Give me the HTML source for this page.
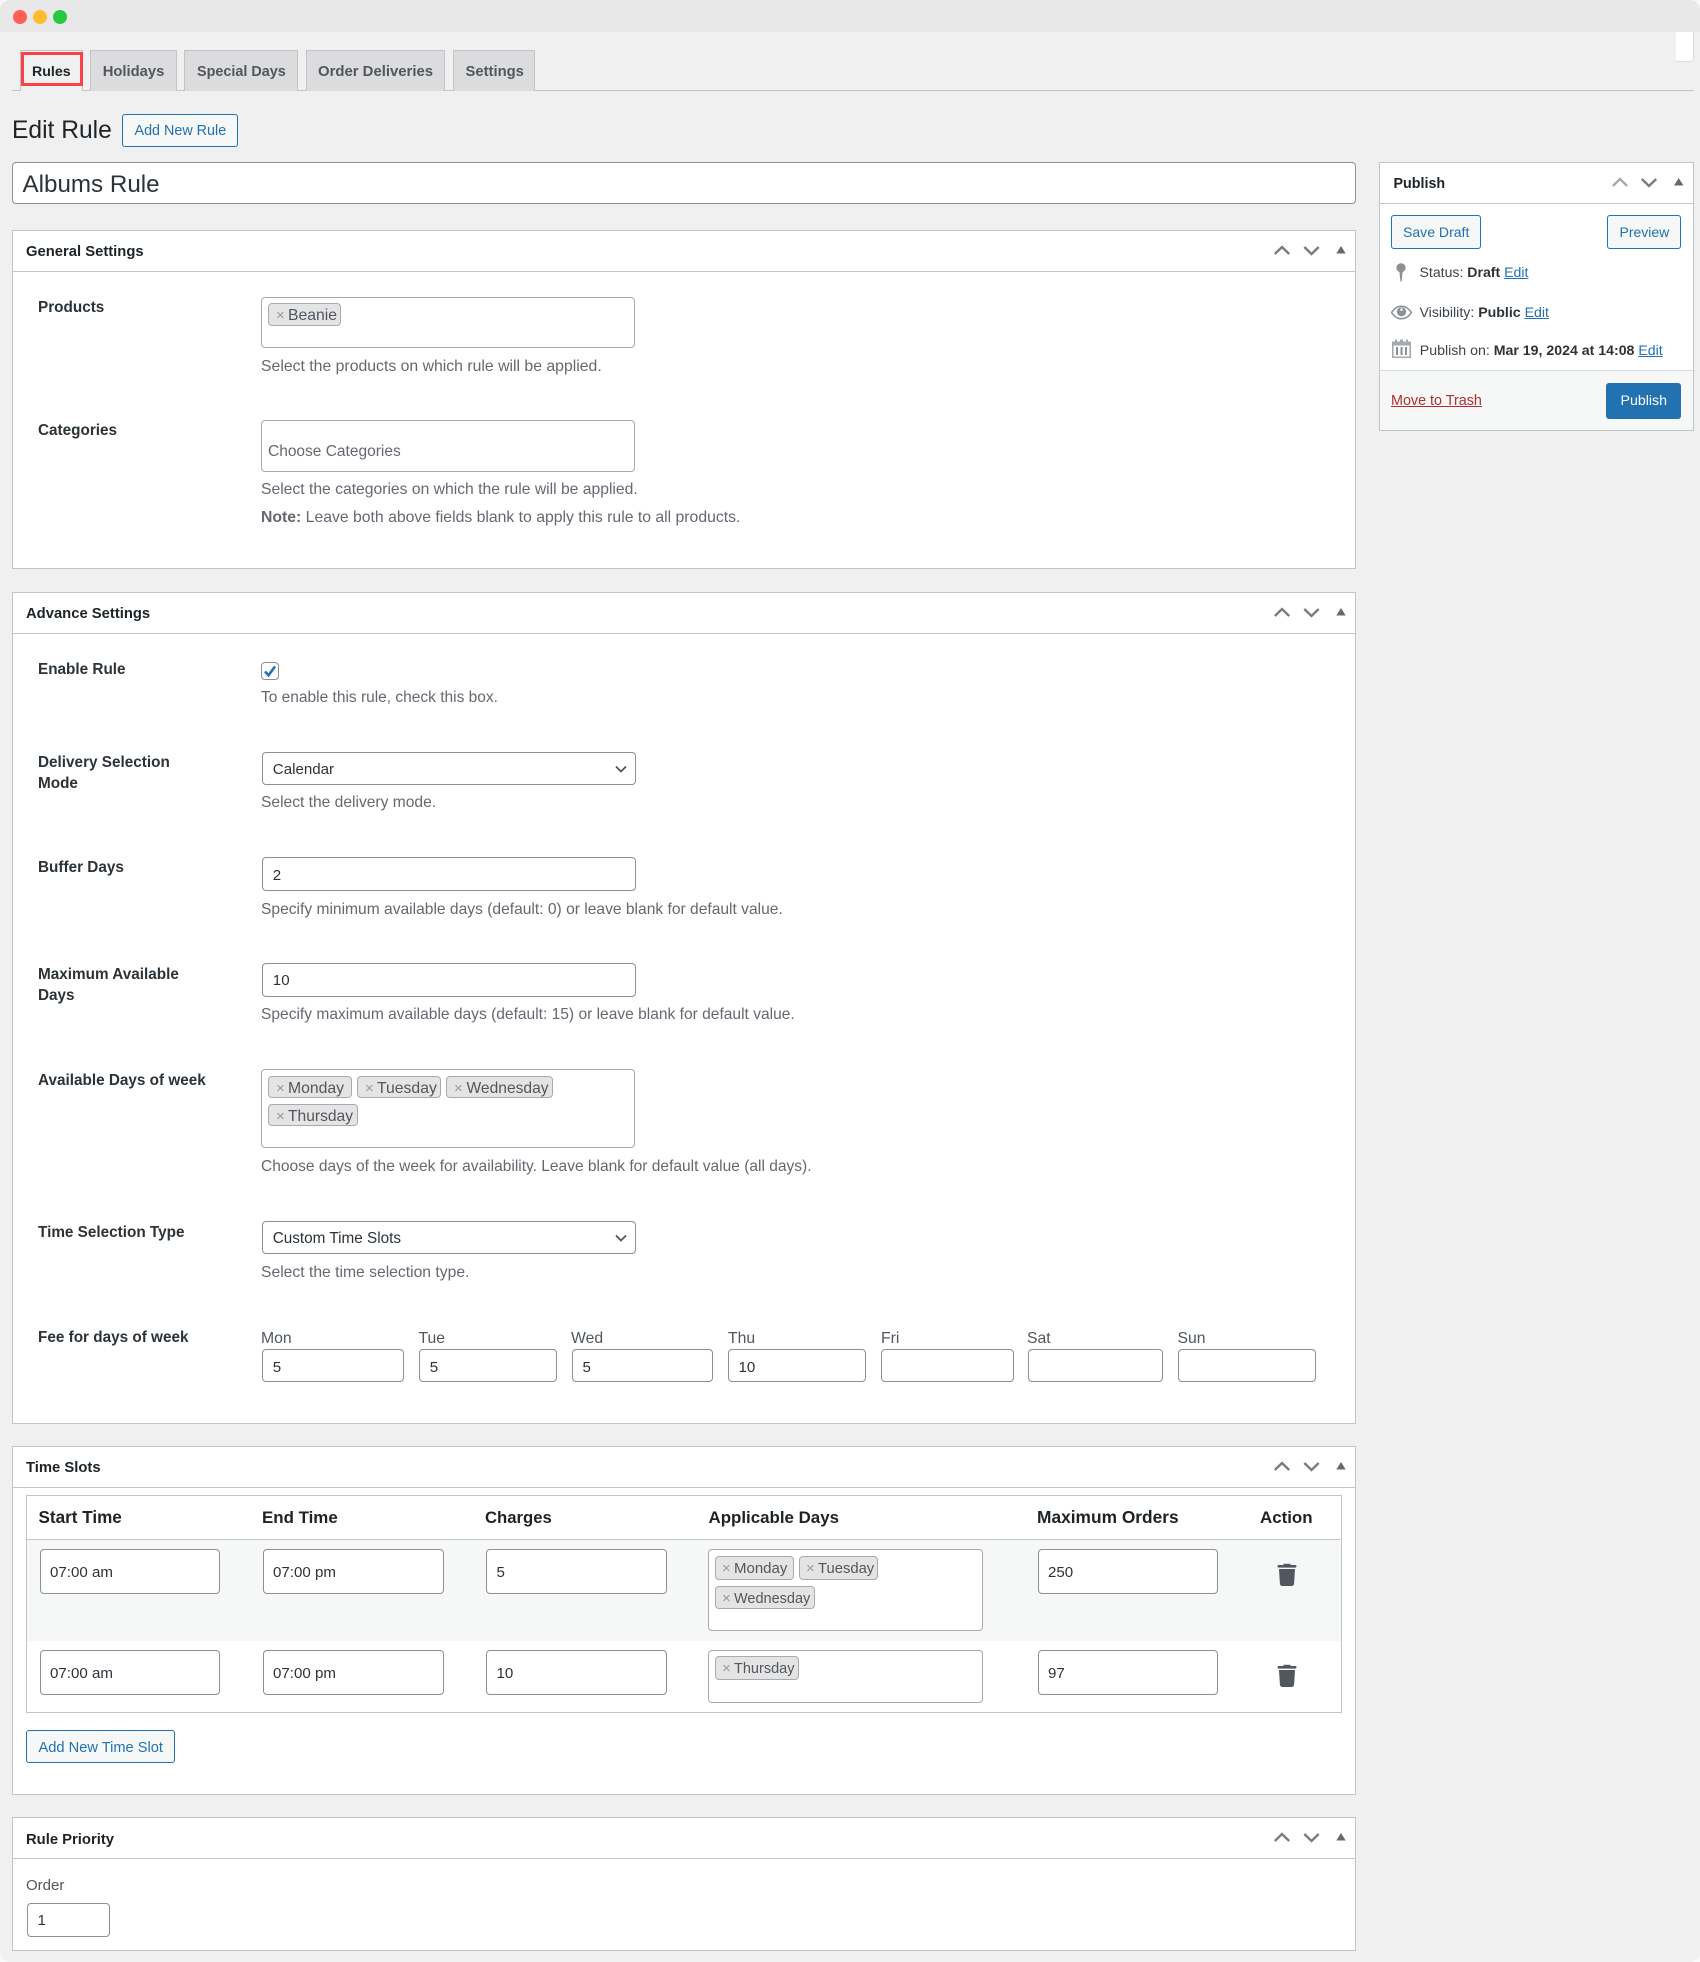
<!DOCTYPE html>
<html lang="en"><head><meta charset="utf-8"><title>Edit Rule</title>
<style>
html,body{margin:0;padding:0;background:#fafafa}
#p{position:relative;width:1700px;height:1962px;overflow:hidden;background:#f0f0f1;border-radius:10px;font-family:"Liberation Sans",sans-serif;color:#2c3338}
#p div,#p svg,#p span.a{position:absolute;box-sizing:border-box}
.t{line-height:0;white-space:nowrap;top:calc(var(--b)*1px - .3465em)}
.d{font-size:15.75px;color:#646970;margin-top:1.2px}
.l{font-size:15.3px;font-weight:700;color:#2c3338;margin-top:1.4px}
.h{font-size:14.8px;font-weight:700;color:#1d2327;left:26px;margin-top:1.2px}
.i{font-size:15.1px;color:#2c3338;margin-top:.6px}
.s{font-size:14.1px;color:#3c434a;margin-top:-.7px}
.s b{color:#2c3338}
.s a{color:#2271b1;text-decoration:underline}
.th{font-size:16.9px;font-weight:700;color:#1d2327;margin-top:1px}
.box{background:#fff;border:1px solid #c3c4c7}
.line{height:1px;background:#c3c4c7}
.inp{background:#fff;border:1px solid #8c8f94;border-radius:4px}
.sel2{background:#fff;border:1px solid #a7aaad;border-radius:4px}
.tag{background:#e4e4e4;border:1px solid #aaa;border-radius:4px}
.btn{background:#f6f7f7;border:1px solid #2271b1;border-radius:3px}
.bt{font-size:14.2px;color:#2271b1}
.tab{top:50px;height:41px;background:#dcdcde;border:1px solid #c3c4c7;border-bottom:0}
.tt{font-size:14.8px;font-weight:700;color:#50575e}
.x{font-size:15px;color:#999;margin-top:1.2px;margin-left:1px}
.tg{font-size:15.75px;color:#50575e;margin-top:1.2px}
.tg2{font-size:14.8px;color:#50575e;margin-top:1.2px}
.lb{font-size:15.75px;color:#50575e;margin-top:.6px}
</style></head><body>
<div id="p">
<svg width="0" height="0" style="left:0;top:0"><defs>
<symbol id="ctl" viewBox="0 0 76 16"><path d="M.8 12 8 5l7.2 7" fill="none" stroke="#787c82" stroke-width="2.4"/><path d="M30.3 5l7.2 7 7.2-7" fill="none" stroke="#787c82" stroke-width="2.4"/><path d="M62.3 11.5h9.4L67 4z" fill="#646970"/></symbol>
<symbol id="arr" viewBox="0 0 12 8"><path d="M1 1.5l5 5 5-5" fill="none" stroke="#50575e" stroke-width="1.8"/></symbol>
<symbol id="tr" viewBox="0 0 20 23"><path d="M6.5 2V.8h7V2z" fill="#50575e"/><rect x=".5" y="2" width="19" height="2.6" rx="1.2" fill="#50575e"/><path d="M2 6h16l-.9 14.6A2.4 2.4 0 0 1 14.7 23H5.3a2.4 2.4 0 0 1-2.4-2.4z" fill="#50575e"/></symbol>
</defs></svg>

<!-- title bar -->
<div style="left:0;top:0;width:1700px;height:32px;background:#e8e8e8"></div>
<div style="left:13px;top:10px;width:14px;height:14px;border-radius:50%;background:#ff5f57"></div>
<div style="left:33px;top:10px;width:14px;height:14px;border-radius:50%;background:#febc2e"></div>
<div style="left:53px;top:10px;width:14px;height:14px;border-radius:50%;background:#28c840"></div>
<div style="left:1676px;top:32px;width:18px;height:30px;background:#fff;border-right:1px solid #ddd;border-bottom:1px solid #ddd;border-bottom-right-radius:4px"></div>

<!-- tabs -->
<div class="line" style="left:12px;top:90px;width:1682px"></div>
<div class="tab" style="left:20px;width:63px;background:#f0f0f1"></div>
<div style="left:21px;top:52px;width:62px;height:34px;border:3px solid #f9434a"></div>
<div class="t tt" style="--b:77;left:32px;color:#1d2327;font-size:14.2px">Rules</div>
<div class="tab" style="left:90px;width:87px"></div><div class="t tt" style="--b:77;left:102.7px">Holidays</div>
<div class="tab" style="left:184px;width:114px"></div><div class="t tt" style="--b:77;left:197px;font-size:14.4px">Special Days</div>
<div class="tab" style="left:306px;width:139px"></div><div class="t tt" style="--b:77;left:318px;font-size:14.9px">Order Deliveries</div>
<div class="tab" style="left:453px;width:82px"></div><div class="t tt" style="--b:77;left:465.5px">Settings</div>

<!-- heading -->
<div class="t" style="--b:140;left:12px;font-size:24.6px;color:#1d2327">Edit Rule</div>
<div class="btn" style="left:122px;top:114px;width:116px;height:33px"></div>
<div class="t bt" style="--b:136;left:134.5px;font-size:14.35px">Add New Rule</div>
<div class="inp" style="left:12px;top:162px;width:1344px;height:42px"></div>
<div class="t" style="--b:193;left:22.5px;font-size:24.2px;color:#2c3338">Albums Rule</div>

<!-- General Settings -->
<div class="box" style="left:12px;top:230px;width:1344px;height:339px"></div>
<div class="line" style="left:12px;top:271px;width:1344px"></div>
<div class="t h" style="--b:256">General Settings</div>
<svg style="left:1274px;top:242px" width="76" height="16"><use href="#ctl"/></svg>

<div class="t l" style="--b:312;left:38px">Products</div>
<div class="sel2" style="left:261px;top:297px;width:374px;height:51px"></div>
<div class="tag" style="left:268px;top:303px;width:73px;height:23px"></div>
<div class="t x" style="--b:320;left:275px">×</div><div class="t tg" style="--b:320;left:288px">Beanie</div>
<div class="t d" style="--b:371.5;left:261px;font-size:15.8px">Select the products on which rule will be applied.</div>

<div class="t l" style="--b:435;left:38px">Categories</div>
<div class="sel2" style="left:261px;top:420px;width:374px;height:52px"></div>
<div class="t" style="--b:457;left:268px;font-size:15.5px;color:#646970">Choose Categories</div>
<div class="t d" style="--b:494;left:261px;font-size:15.7px">Select the categories on which the rule will be applied.</div>
<div class="t d" style="--b:522;left:261px;font-size:15.78px"><b>Note:</b> Leave both above fields blank to apply this rule to all products.</div>

<!-- Advance Settings -->
<div class="box" style="left:12px;top:592px;width:1344px;height:832px"></div>
<div class="line" style="left:12px;top:633px;width:1344px"></div>
<div class="t h" style="--b:618">Advance Settings</div>
<svg style="left:1274px;top:604px" width="76" height="16"><use href="#ctl"/></svg>

<div class="t l" style="--b:674;left:38px">Enable Rule</div>
<div class="inp" style="left:261px;top:662px;width:18px;height:18px"></div>
<svg style="left:261px;top:662px" width="18" height="18" viewBox="0 0 18 18"><path d="M4 9.5l3.5 3.8L14 4.5" fill="none" stroke="#2271b1" stroke-width="2.6"/></svg>
<div class="t d" style="--b:702;left:261px;font-size:15.5px">To enable this rule, check this box.</div>

<div class="t l" style="--b:767;left:38px">Delivery Selection</div>
<div class="t l" style="--b:788;left:38px">Mode</div>
<div class="inp" style="left:262px;top:752px;width:374px;height:33px"></div>
<div class="t i" style="--b:774.5;left:272.8px">Calendar</div>
<svg style="left:615px;top:765px" width="12" height="8"><use href="#arr"/></svg>
<div class="t d" style="--b:807.7;left:261px;font-size:15.6px">Select the delivery mode.</div>

<div class="t l" style="--b:872;left:38px">Buffer Days</div>
<div class="inp" style="left:262px;top:857px;width:374px;height:34px"></div>
<div class="t i" style="--b:881;left:272.8px">2</div>
<div class="t d" style="--b:914;left:261px;font-size:15.6px">Specify minimum available days (default: 0) or leave blank for default value.</div>

<div class="t l" style="--b:979;left:38px">Maximum Available</div>
<div class="t l" style="--b:1000;left:38px">Days</div>
<div class="inp" style="left:262px;top:963px;width:374px;height:34px"></div>
<div class="t i" style="--b:986;left:272.8px">10</div>
<div class="t d" style="--b:1019.5;left:261px;font-size:15.57px">Specify maximum available days (default: 15) or leave blank for default value.</div>

<div class="t l" style="--b:1085;left:38px">Available Days of week</div>
<div class="sel2" style="left:261px;top:1069px;width:374px;height:79px"></div>
<div class="tag" style="left:268px;top:1076px;width:84px;height:22px"></div>
<div class="t x" style="--b:1093;left:275px">×</div><div class="t tg" style="--b:1093;left:288px">Monday</div>
<div class="tag" style="left:357px;top:1076px;width:84px;height:22px"></div>
<div class="t x" style="--b:1093;left:364px">×</div><div class="t tg" style="--b:1093;left:377px">Tuesday</div>
<div class="tag" style="left:446px;top:1076px;width:107px;height:22px"></div>
<div class="t x" style="--b:1093;left:453px">×</div><div class="t tg" style="--b:1093;left:466.5px;font-size:15.6px">Wednesday</div>
<div class="tag" style="left:268px;top:1104px;width:90px;height:22px"></div>
<div class="t x" style="--b:1121;left:275px">×</div><div class="t tg" style="--b:1121;left:288px;font-size:15.6px">Thursday</div>
<div class="t d" style="--b:1171;left:261px;font-size:15.54px">Choose days of the week for availability. Leave blank for default value (all days).</div>

<div class="t l" style="--b:1237;left:38px">Time Selection Type</div>
<div class="inp" style="left:262px;top:1221px;width:374px;height:33px"></div>
<div class="t i" style="--b:1244;left:272.7px;font-size:15.3px">Custom Time Slots</div>
<svg style="left:615px;top:1234px" width="12" height="8"><use href="#arr"/></svg>
<div class="t d" style="--b:1277;left:261px;font-size:15.7px">Select the time selection type.</div>

<div class="t l" style="--b:1342;left:38px">Fee for days of week</div>
<div class="t lb" style="--b:1344;left:261px">Mon</div><div class="inp" style="left:262px;top:1349px;width:142px;height:33px"></div><div class="t i" style="--b:1372.4;left:272.7px">5</div>
<div class="t lb" style="--b:1344;left:418.5px">Tue</div><div class="inp" style="left:419px;top:1349px;width:138px;height:33px"></div><div class="t i" style="--b:1372.4;left:429.7px">5</div>
<div class="t lb" style="--b:1344;left:571px">Wed</div><div class="inp" style="left:572px;top:1349px;width:141px;height:33px"></div><div class="t i" style="--b:1372.4;left:582.5px">5</div>
<div class="t lb" style="--b:1344;left:728px">Thu</div><div class="inp" style="left:728px;top:1349px;width:138px;height:33px"></div><div class="t i" style="--b:1372.4;left:738.5px">10</div>
<div class="t lb" style="--b:1344;left:881px">Fri</div><div class="inp" style="left:881px;top:1349px;width:133px;height:33px"></div>
<div class="t lb" style="--b:1344;left:1027px">Sat</div><div class="inp" style="left:1028px;top:1349px;width:135px;height:33px"></div>
<div class="t lb" style="--b:1344;left:1177.5px">Sun</div><div class="inp" style="left:1178px;top:1349px;width:138px;height:33px"></div>

<!-- Time Slots -->
<div class="box" style="left:12px;top:1446px;width:1344px;height:349px"></div>
<div class="line" style="left:12px;top:1487px;width:1344px"></div>
<div class="t h" style="--b:1472">Time Slots</div>
<svg style="left:1274px;top:1458px" width="76" height="16"><use href="#ctl"/></svg>

<div class="box" style="left:26px;top:1495px;width:1316px;height:218px"></div>
<div style="left:27px;top:1540px;width:1314px;height:101px;background:#f6f7f7"></div>
<div class="line" style="left:27px;top:1539px;width:1313px"></div>
<div class="t th" style="--b:1523;left:38.5px;font-size:17.1px">Start Time</div>
<div class="t th" style="--b:1523;left:262px">End Time</div>
<div class="t th" style="--b:1523;left:485px;font-size:16.7px">Charges</div>
<div class="t th" style="--b:1523;left:708.5px">Applicable Days</div>
<div class="t th" style="--b:1522;left:1037px;font-size:17.35px">Maximum Orders</div>
<div class="t th" style="--b:1523;left:1260px">Action</div>

<div class="inp" style="left:40px;top:1549px;width:180px;height:45px"></div><div class="t i" style="--b:1578;left:50px">07:00 am</div>
<div class="inp" style="left:263px;top:1549px;width:181px;height:45px"></div><div class="t i" style="--b:1578;left:273px">07:00 pm</div>
<div class="inp" style="left:486px;top:1549px;width:181px;height:45px"></div><div class="t i" style="--b:1578;left:496.5px">5</div>
<div class="sel2" style="left:708px;top:1549px;width:275px;height:82px"></div>
<div class="tag" style="left:715px;top:1556px;width:79px;height:24px"></div>
<div class="t x" style="--b:1573;left:721px">×</div><div class="t tg2" style="--b:1573;left:734px;font-size:15px">Monday</div>
<div class="tag" style="left:799px;top:1556px;width:79px;height:24px"></div>
<div class="t x" style="--b:1573;left:805px">×</div><div class="t tg2" style="--b:1573;left:818px">Tuesday</div>
<div class="tag" style="left:715px;top:1586px;width:100px;height:23px"></div>
<div class="t x" style="--b:1603;left:721px">×</div><div class="t tg2" style="--b:1603;left:734px;font-size:14.5px">Wednesday</div>
<div class="inp" style="left:1038px;top:1549px;width:180px;height:45px"></div><div class="t i" style="--b:1578;left:1048px">250</div>
<svg style="left:1277px;top:1563px" width="20" height="23"><use href="#tr"/></svg>

<div class="inp" style="left:40px;top:1650px;width:180px;height:45px"></div><div class="t i" style="--b:1679;left:50px">07:00 am</div>
<div class="inp" style="left:263px;top:1650px;width:181px;height:45px"></div><div class="t i" style="--b:1679;left:273px">07:00 pm</div>
<div class="inp" style="left:486px;top:1650px;width:181px;height:45px"></div><div class="t i" style="--b:1679;left:496.5px">10</div>
<div class="sel2" style="left:708px;top:1650px;width:275px;height:53px"></div>
<div class="tag" style="left:715px;top:1656px;width:84px;height:24px"></div>
<div class="t x" style="--b:1673;left:721px">×</div><div class="t tg2" style="--b:1673;left:734px;font-size:14.5px">Thursday</div>
<div class="inp" style="left:1038px;top:1650px;width:180px;height:45px"></div><div class="t i" style="--b:1679;left:1048px">97</div>
<svg style="left:1277px;top:1664px" width="20" height="23"><use href="#tr"/></svg>

<div class="btn" style="left:26px;top:1730px;width:149px;height:33px"></div>
<div class="t bt" style="--b:1753;left:38.5px;font-size:14.65px">Add New Time Slot</div>

<!-- Rule Priority -->
<div class="box" style="left:12px;top:1817px;width:1344px;height:134px"></div>
<div class="line" style="left:12px;top:1858px;width:1344px"></div>
<div class="t h" style="--b:1844">Rule Priority</div>
<svg style="left:1274px;top:1829px" width="76" height="16"><use href="#ctl"/></svg>
<div class="t" style="--b:1891;left:26px;font-size:15px;color:#50575e">Order</div>
<div class="inp" style="left:27px;top:1903px;width:83px;height:34px"></div>
<div class="t i" style="--b:1926;left:37.5px">1</div>

<!-- Publish -->
<div class="box" style="left:1379px;top:162px;width:315px;height:269px"></div>
<div class="line" style="left:1379px;top:203px;width:315px"></div>
<div class="t" style="--b:189;left:1393.5px;font-size:14.3px;font-weight:700;color:#1d2327">Publish</div>
<svg style="left:1612px;top:174px" width="76" height="16" viewBox="0 0 76 16"><path d="M.8 12 8 5l7.2 7" fill="none" stroke="#a7aaad" stroke-width="2.4"/><path d="M29.8 5l7.2 7 7.2-7" fill="none" stroke="#787c82" stroke-width="2.4"/><path d="M62 11.5h9.4L66.7 4z" fill="#646970"/></svg>
<div class="btn" style="left:1391px;top:215px;width:90px;height:34px"></div>
<div class="t bt" style="--b:237;left:1403px;font-size:14.05px">Save Draft</div>
<div class="btn" style="left:1607px;top:215px;width:74px;height:34px"></div>
<div class="t bt" style="--b:237;left:1619.5px;font-size:14px">Preview</div>

<svg style="left:1395px;top:263px" width="12" height="19" viewBox="0 0 12 19"><circle cx="6" cy="4.8" r="4.6" fill="#8c8f94"/><path d="M4.3 8h3.4L6.6 18.5H5.4z" fill="#8c8f94"/></svg>
<div class="t s" style="--b:278;left:1419.5px">Status: <b>Draft</b> <a>Edit</a></div>
<svg style="left:1391px;top:305px" width="21" height="15" viewBox="0 0 21 15"><path d="M.6 7.5C3.2 3.4 6.6 1.2 10.5 1.2s7.3 2.2 9.9 6.3c-2.6 4.1-6 6.3-9.9 6.3S3.2 11.6.6 7.5z" fill="none" stroke="#8c8f94" stroke-width="1.5"/><circle cx="10.5" cy="6.8" r="4.6" fill="#8c8f94"/><circle cx="10.5" cy="4.6" r="1.3" fill="#fff"/></svg>
<div class="t s" style="--b:318;left:1419.5px;font-size:14.15px">Visibility: <b>Public</b> <a>Edit</a></div>
<svg style="left:1392px;top:339px" width="19" height="19" viewBox="0 0 19 19"><path d="M0 2.5h3V.5h2v2h3V.5h3v2h3V.5h2v2h3V19H0z" fill="#a7aaad"/><rect x="1.6" y="6.5" width="15.8" height="11" fill="#fff"/><path d="M4 8h2v8H4zM8.5 8h2v8h-2zM13 8h2v8h-2z" fill="#8c8f94"/></svg>
<div class="t s" style="--b:356;left:1419.8px;font-size:14.15px">Publish on: <b>Mar 19, 2024 at 14:08</b> <a>Edit</a></div>

<div style="left:1380px;top:370px;width:313px;height:60px;background:#f6f7f7;border-top:1px solid #dcdcde"></div>
<div class="t s" style="--b:407;left:1391px;color:#b32d2e;text-decoration:underline;font-size:14.35px">Move to Trash</div>
<div style="left:1606px;top:383px;width:75px;height:36px;background:#2271b1;border-radius:3px"></div>
<div class="t" style="--b:406;left:1620.5px;font-size:14.2px;color:#fff">Publish</div>
</div>
</body></html>
